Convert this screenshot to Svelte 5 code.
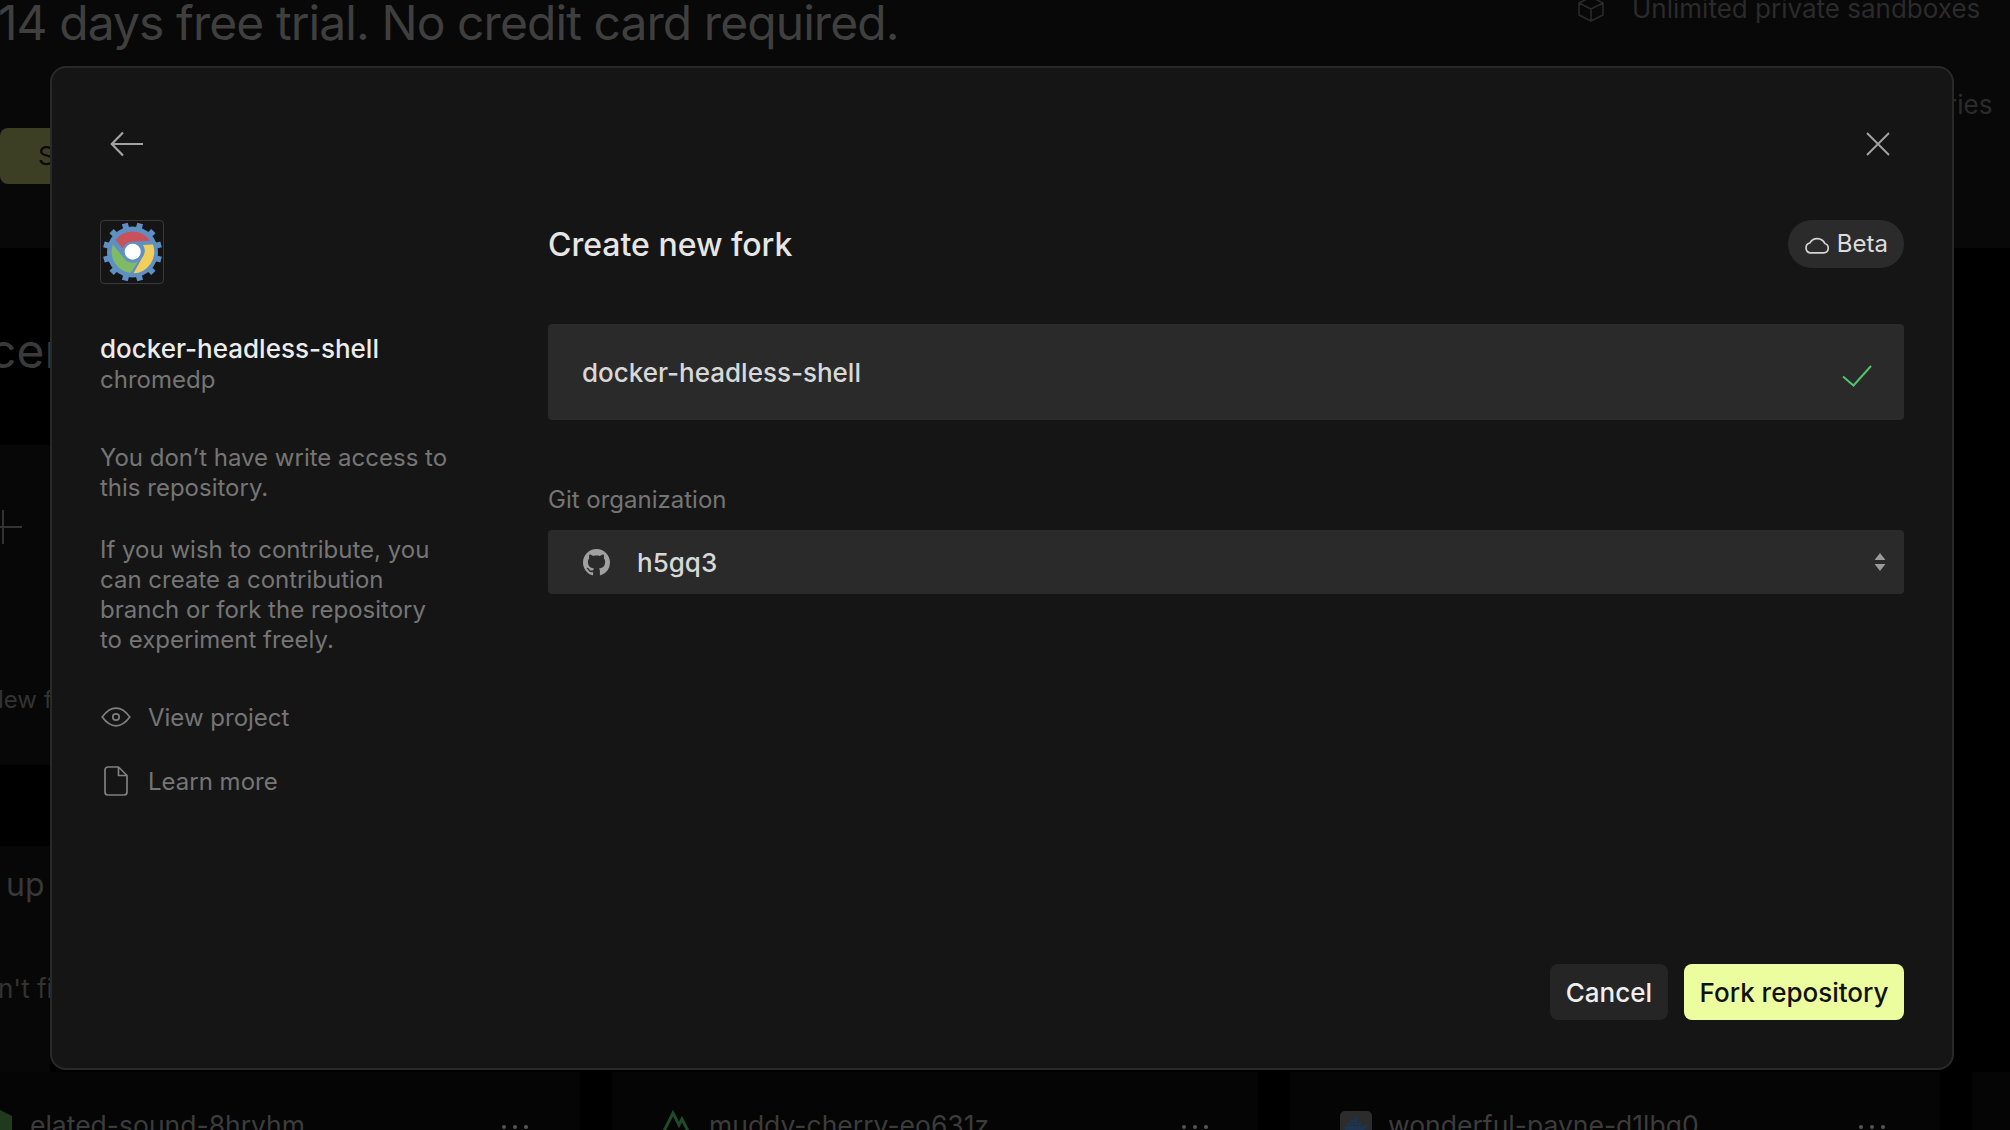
<script>
  const teeth = Array.from({ length: 12 }, (_, i) => i * 30 + 15);
  const description = ["You don’t have write access to this repository.", "If you wish to contribute, you can create a contribution branch or fork the repository to experiment freely."];
  const github = "M8 0C3.58 0 0 3.58 0 8c0 3.54 2.29 6.53 5.47 7.59.4.07.55-.17.55-.38 0-.19-.01-.82-.01-1.49-2.01.37-2.53-.49-2.69-.94-.09-.23-.48-.94-.82-1.13-.28-.15-.68-.52-.01-.53.63-.01 1.08.58 1.23.82.72 1.21 1.87.87 2.33.66.07-.52.28-.87.51-1.07-1.78-.2-3.64-.89-3.64-3.95 0-.87.31-1.59.82-2.15-.08-.2-.36-1.02.08-2.12 0 0 .67-.21 2.2.82.64-.18 1.32-.27 2-.27.68 0 1.36.09 2 .27 1.53-1.04 2.2-.82 2.2-.82.44 1.1.16 1.92.08 2.12.51.56.82 1.27.82 2.15 0 3.07-1.87 3.75-3.65 3.95.29.25.54.73.54 1.48 0 1.07-.01 1.93-.01 2.2 0 .21.15.46.55.38A8.013 8.013 0 0016 8c0-4.42-3.58-8-8-8z";
</script>

<div class="page">
  <div class="behind">
    <div class="band"></div>
    <div class="panel p1"></div>
    <div class="panel p2"></div>
    <div class="frag headline">14 days free trial. No credit card required.</div>
    <div class="frag feature">
      <svg width="26" height="26" viewBox="0 0 26 26" fill="none" stroke="#2b2b2b" stroke-width="1.5" stroke-linejoin="round"><path d="M13 1 L25 7 V19 L13 25 L1 19 V7 Z M1 7 L13 13 L25 7 M13 13 V25"/></svg>
      <span>Unlimited private sandboxes</span>
    </div>
    <div class="frag ries">ries</div>
    <div class="frag start">S</div>
    <div class="frag cer">cer</div>
    <div class="frag plus"></div>
    <div class="frag lew">lew f</div>
    <div class="frag up">up</div>
    <div class="frag nt">n't fi</div>
    <div class="cards">
      <div class="card">
        <svg class="ci" width="14" height="24" viewBox="0 0 14 24"><path d="M0 0 L12 6 V24 H0 Z" fill="#1f3a1c"/></svg>
        <span>elated-sound-8hryhm</span><b><i></i><i></i><i></i></b>
      </div>
      <div class="card second">
        <svg width="32" height="28" viewBox="0 0 32 28" fill="none" stroke="#1f4a2b" stroke-width="3"><path d="M2 26 L13 4 L19 16 L22 10 L30 26"/></svg>
        <span>muddy-cherry-eo631z</span><b><i></i><i></i><i></i></b>
      </div>
      <div class="card third">
        <div class="dock">
          <svg width="26" height="20" viewBox="0 0 26 20" fill="#1c3553"><path d="M1 9 H21 C22 7 24 7 25 8.5 C24.5 11 23 12 21.5 12 C19 17 14 19 9 19 C4 19 1.5 15 1 9 Z"/><rect x="4" y="5.6" width="3" height="2.6"/><rect x="7.6" y="5.6" width="3" height="2.6"/><rect x="11.2" y="5.6" width="3" height="2.6"/><rect x="14.8" y="5.6" width="3" height="2.6"/><rect x="7.6" y="2.4" width="3" height="2.6"/><rect x="11.2" y="2.4" width="3" height="2.6"/><rect x="11.2" y="0" width="3" height="2"/></svg>
        </div>
        <span>wonderful-payne-d1lbg0</span><b><i></i><i></i><i></i></b>
      </div>
      <div class="card fourth"></div>
    </div>
  </div>

  <div class="overlay">
    <section class="modal">
      <header class="top">
        <svg class="ic" width="34" height="26" viewBox="0 0 34 26" fill="none" stroke="#a3a3a3" stroke-width="2.2"><path d="M33 13 H2 M13 1.5 L1.8 13 L13 24.5"/></svg>
        <svg class="ic" width="24" height="24" viewBox="0 0 24 24" fill="none" stroke="#a3a3a3" stroke-width="1.9"><path d="M1 1 L23 23 M23 1 L1 23"/></svg>
      </header>

      <div class="body">
        <aside class="side">
          <div class="avatar">
            <svg width="62" height="62" viewBox="1 1 62 62">
              <g fill="#5f8fc3">
                <circle cx="32.5" cy="32" r="25.5"/>
                {#each teeth as t}
                  <rect x="29.5" y="2.4" width="6" height="8" transform="rotate({t} 32.5 32)"/>
                {/each}
              </g>
              <path d="M15.7 20 A21 21 0 0 1 50 20.7 L33 21.7 A10.5 10.5 0 0 0 22.7 28.3 Z" fill="#c9515a"/>
              <path d="M12.8 24.5 A21.5 21.5 0 0 0 30.5 53 L38 41.5 A11 11 0 0 1 23.5 37.5 Z" fill="#7fbb64"/>
              <path d="M53 24.5 A21.5 21.5 0 0 1 33.5 53.3 L42.3 37.5 A11 11 0 0 0 43 25 Z" fill="#f2ce5c"/>
              <circle cx="32.7" cy="31.7" r="8" fill="#fff"/>
            </svg>
          </div>
          <div class="repo">
            <div class="name">docker-headless-shell</div>
            <div class="owner">chromedp</div>
          </div>
          <div class="desc">
            {#each description as p}<p>{p}</p>{/each}
          </div>
          <div class="links">
            <div class="link">
              <span class="li"><svg width="30" height="20" viewBox="0 0 30 20" fill="none" stroke="#7f7f7f" stroke-width="1.7"><path d="M1.2 10 C6 3.5 10 1.2 15 1.2 S24 3.5 28.8 10 C24 16.5 20 18.8 15 18.8 S6 16.5 1.2 10 Z"/><circle cx="15" cy="10" r="3.2"/></svg></span>
              View project
            </div>
            <div class="link">
              <span class="li doc"><svg width="24" height="30" viewBox="0 0 24 30" fill="none" stroke="#7f7f7f" stroke-width="1.7" stroke-linejoin="round"><path d="M14.5 1 H4 A3 3 0 0 0 1 4 V26 A3 3 0 0 0 4 29 H20 A3 3 0 0 0 23 26 V9.5 Z M14.5 1 V9.5 H23"/></svg></span>
              Learn more
            </div>
          </div>
        </aside>

        <main class="form">
          <div class="heading">
            <h2>Create new fork</h2>
            <div class="pill">
              <svg width="26" height="19" viewBox="0 0 25 18" fill="none" stroke="#d4d4d4" stroke-width="1.6" stroke-linejoin="round"><path d="M6 17 H19 A4.6 4.6 0 0 0 20 8 A8 8 0 0 0 5.6 7.6 A4.8 4.8 0 0 0 6 17 Z"/></svg>
              <span>Beta</span>
            </div>
          </div>
          <div class="input">
            <span>docker-headless-shell</span>
            <svg width="30" height="22" viewBox="0 0 30 22" fill="none" stroke="#4fc46a" stroke-width="2"><path d="M1 11.5 L11.5 20.5 L29 1"/></svg>
          </div>
          <label class="label" for="org">Git organization</label>
          <div class="select" id="org">
            <svg width="27" height="27" viewBox="0 0 16 16" fill="#a0a0a0"><path d={github}/></svg>
            <span>h5gq3</span>
            <svg class="updown" width="12" height="20" viewBox="0 0 12 20" fill="#9a9a9a"><path d="M6 1 L11.5 8 H0.5 Z M6 19 L0.5 12 H11.5 Z"/></svg>
          </div>
          <div class="actions">
            <button class="cancel">Cancel</button>
            <button class="fork">Fork repository</button>
          </div>
        </main>
      </div>
    </section>
  </div>
</div>

<style>
  :global(body) { margin: 0; background: #000; }
  .page {
    position: relative;
    width: 2010px;
    height: 1130px;
    overflow: hidden;
    background: #000;
    font-family: Inter, "Liberation Sans", sans-serif;
  }
  .behind { position: absolute; inset: 0; }
  .band { height: 248px; background: #080808; }
  .panel { position: absolute; left: 0; width: 50px; background: #070707; }
  .p1 { top: 445px; height: 320px; }
  .p2 { top: 846px; height: 226px; }
  .frag { position: absolute; white-space: nowrap; }
  .headline { left: -2px; top: -6px; font-size: 48px; line-height: 58px; letter-spacing: -0.93px; color: #3f3f3f; }
  .feature { left: 1578px; top: -6px; display: flex; align-items: center; gap: 28px; font-size: 26px; line-height: 30px; color: #2b2b2b; }
  .ries { left: 1947px; top: 90px; font-size: 26px; line-height: 30px; color: #2b2b2b; }
  .start { left: 0; top: 128px; width: 50px; height: 56px; background: #3d3f25; border-radius: 8px 0 0 8px; color: #0a0a0a; font-size: 26px; line-height: 56px; text-indent: 38px; overflow: hidden; }
  .cer { left: -11px; top: 322px; font-size: 48px; line-height: 58px; color: #3a3a3a; }
  .plus { left: -16px; top: 510px; width: 38px; height: 34px; background: linear-gradient(#333,#333) center / 100% 2px no-repeat, linear-gradient(#333,#333) center / 2px 100% no-repeat; }
  .lew { left: -2px; top: 685px; font-size: 24px; line-height: 30px; color: #333; }
  .up { left: 6px; top: 866px; font-size: 32px; line-height: 38px; color: #383838; }
  .nt { left: -2px; top: 974px; font-size: 26px; line-height: 30px; color: #333; }
  .cards { position: absolute; left: 0; right: 0; top: 1072px; height: 58px; display: flex; gap: 32px; }
  .card { flex: 0 0 580px; position: relative; background: #050505; overflow: hidden; color: #3c3c3c; font-size: 26.5px; }
  .card span { position: absolute; top: 38px; line-height: 30px; left: 30px; white-space: nowrap; }
  .card b { position: absolute; top: 53px; right: 52px; display: flex; gap: 7px; }
  .card b i { width: 4px; height: 4px; border-radius: 50%; background: #555; }
  .ci { position: absolute; left: 0; top: 38px; }
  .second { flex-basis: 646px; }
  .second svg { position: absolute; left: 48px; top: 37px; }
  .second span { left: 97px; }
  .second b { right: 50px; }
  .third { flex-basis: 650px; }
  .third span { left: 98px; }
  .third b { right: 55px; }
  .fourth { flex: 1; }
  .dock { position: absolute; left: 50px; top: 39px; width: 32px; height: 32px; border-radius: 5px; background: #2c2c2c; display: flex; align-items: flex-start; justify-content: center; padding-top: 6px; box-sizing: border-box; }

  .overlay { position: absolute; inset: 0; padding: 66px 0 0 50px; box-sizing: border-box; }
  .modal {
    width: 1904px;
    height: 1004px;
    box-sizing: border-box;
    padding: 0 48px 48px;
    display: flex;
    flex-direction: column;
    background: #151515;
    border: 2px solid #292929;
    border-radius: 16px;
  }
  .top { display: flex; justify-content: space-between; align-items: center; height: 152px; flex: none; padding: 0 14px 0 10px; box-sizing: border-box; }
  .ic { display: block; }
  .body { flex: 1; display: flex; min-height: 0; }
  .side { width: 448px; flex: none; display: flex; flex-direction: column; }
  .avatar { width: 64px; height: 64px; box-sizing: border-box; border: 1px solid #3a3a3a; border-radius: 4px; display: flex; align-items: center; justify-content: center; }
  .repo { margin-top: 49px; }
  .name { font-size: 26px; line-height: 32px; font-weight: 500; color: #ececec; }
  .owner { font-size: 24px; line-height: 30px; color: #757575; }
  .desc { margin-top: 48px; width: 350px; font-size: 24px; line-height: 30px; color: #757575; }
  .desc p { margin: 0 0 32px; }
  .links { margin-top: 14px; display: flex; flex-direction: column; gap: 32px; }
  .link { display: flex; align-items: center; height: 32px; font-size: 24px; color: #757575; }
  .li { width: 48px; display: flex; justify-content: flex-start; padding-left: 1px; box-sizing: border-box; }
  .doc { padding-left: 4px; }
  .form { flex: 1; display: flex; flex-direction: column; min-width: 0; }
  .heading { display: flex; justify-content: space-between; align-items: center; height: 48px; }
  h2 { margin: 0; font-size: 32px; font-weight: 500; color: #e6e6e6; }
  .pill { display: flex; align-items: center; gap: 7px; height: 48px; padding: 0 16px; box-sizing: border-box; border-radius: 24px; background: #2b2b2b; color: #dcdcdc; font-size: 24px; }
  .pill span { margin-top: -2px; }
  .input { margin-top: 56px; height: 96px; flex: none; display: flex; justify-content: space-between; align-items: center; padding: 0 32px 0 34px; background: #2a2a2a; border-radius: 4px; font-size: 26px; font-weight: 500; color: #d8d8d8; }
  .input svg { margin-top: 8px; }
  .label { margin-top: 65px; font-size: 24px; line-height: 30px; color: #757575; }
  .select { margin-top: 15px; height: 64px; flex: none; display: flex; align-items: center; padding: 0 18px 0 35px; background: #2a2a2a; border-radius: 4px; font-size: 26px; font-weight: 500; color: #d8d8d8; }
  .select span { margin-left: 27px; }
  .updown { margin-left: auto; }
  .actions { margin-top: auto; display: flex; justify-content: flex-end; gap: 16px; }
  button { height: 56px; padding: 0 16px; border: 0; border-radius: 8px; font-family: inherit; font-size: 26px; font-weight: 500; }
  .cancel { background: #252525; color: #efefef; }
  .fork { background: #ecfd9f; color: #111; padding: 0 15.5px; }
</style>
